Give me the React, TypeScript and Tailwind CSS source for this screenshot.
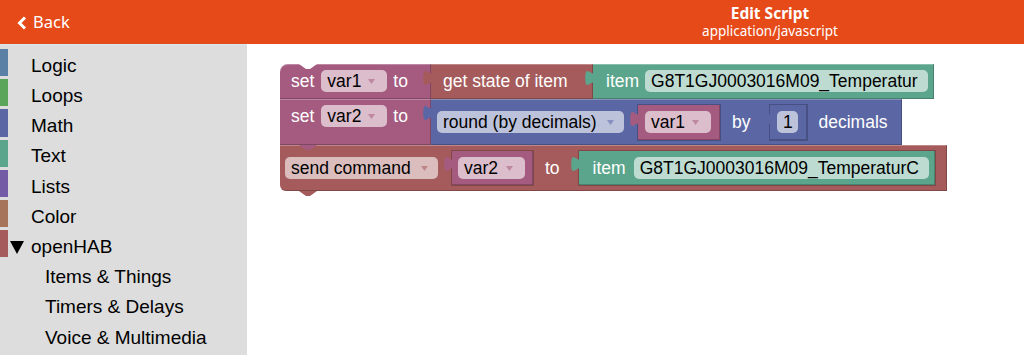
import React from "react";

const PURPLE = "#a55b80";
const RED = "#a55b5b";
const TEAL = "#5ba58c";
const BLUE = "#5b67a5";

const categories = [
    { name: "Logic", color: "#5b80a5" },
    { name: "Loops", color: "#5ba55b" },
    { name: "Math", color: "#5b67a5" },
    { name: "Text", color: "#5ba58c" },
    { name: "Lists", color: "#745ba5" },
    { name: "Color", color: "#a5745b" },
];

const subItems = ["Items & Things", "Timers & Delays", "Voice & Multimedia"];

// output tab drawn into the parent's input slot
function Tab({ color, top = "top-[6px]" }: { color: string; top?: string }) {
    return (
        <svg className={`absolute left-[-8px] ${top}`} width="9" height="16" viewBox="0 0 8 15">
            <path d="M8 0C8 10 0 -8 0 7.5S8 5 8 15Z" fill={color} />
        </svg>
    );
}

function Arrow({ color }: { color: string }) {
    return (
        <svg width="7" height="5" viewBox="0 0 7 5" className="shrink-0">
            <path d="M0 0H7L3.5 5Z" fill={color} opacity="0.55" />
        </svg>
    );
}

function Pill({ text, w, bg, arrow, pr = "pr-[10px]" }: { text: string; w: string; bg: string; arrow?: string; pr?: string }) {
    return (
        <div className={`${w} ${bg} ${pr} h-[22px] rounded-[5px] flex items-center pl-[6px] shrink-0`}>
            <span className="leading-[22px] text-black">{text}</span>
            {arrow && (
                <span className="ml-auto flex">
                    <Arrow color={arrow} />
                </span>
            )}
        </div>
    );
}

const edge = "shadow-[inset_-1px_-1px_0_rgba(0,0,0,0.22),inset_0_1px_0_rgba(255,255,255,0.28)]";
const inlineEdge = "shadow-[0_0_0_1px_rgba(0,0,0,0.22),inset_-1px_-1px_0_rgba(0,0,0,0.2)]";

function Notch({ color, className }: { color: string; className: string }) {
    return (
        <svg className={`absolute left-[19px] ${className}`} width="18" height="5" viewBox="0 0 18 5">
            <path d="M0 0L7 5H11L18 0Z" fill={color} />
        </svg>
    );
}

function Blocks() {
    return (
        <div className="flex flex-col w-fit text-[17.5px] text-white font-['Liberation_Sans',Arial,sans-serif]">
            {/* set var1 to get state of item */}
            <div className="flex">
                <div className={`relative w-[151px] h-[35px] bg-[#a55b80] rounded-tl-[8px] flex items-start pt-[6px] pl-[11px] ${edge}`}>
                    <Notch color="#ffffff" className="top-0" />
                    <span className="leading-[22px]">set</span>
                    <div className="ml-[7px]">
                        <Pill text="var1" w="w-[66px]" bg="bg-[#dbbdcc]" arrow={PURPLE} pr="pr-[12px]" />
                    </div>
                    <span className="ml-[6px] leading-[22px]">to</span>
                </div>
                <div className={`relative w-[162px] h-[35px] bg-[#a55b5b] flex items-start pt-[6px] pl-[12px] ${edge}`}>
                    <Tab color={RED} />
                    <span className="leading-[22px]">get state of item</span>
                </div>
                <div className={`relative w-[341px] h-[35px] bg-[#5ba58c] flex items-start pt-[6px] pl-[13px] ${edge}`}>
                    <Tab color={TEAL} />
                    <span className="leading-[22px]">item</span>
                    <div className="ml-[6px]">
                        <Pill text="G8T1GJ0003016M09_Temperatur" w="w-[283px]" bg="bg-[#bddbd1]" />
                    </div>
                </div>
            </div>

            {/* set var2 to round */}
            <div className="flex">
                <div className={`relative w-[151px] h-[46px] bg-[#a55b80] flex items-start pt-[6px] pl-[11px] ${edge}`}>
                    <span className="leading-[22px]">set</span>
                    <div className="ml-[7px]">
                        <Pill text="var2" w="w-[66px]" bg="bg-[#dbbdcc]" arrow={PURPLE} pr="pr-[12px]" />
                    </div>
                    <span className="ml-[6px] leading-[22px]">to</span>
                </div>
                <div className={`relative w-[471px] h-[46px] bg-[#5b67a5] flex items-center pl-[6px] ${edge}`}>
                    <Tab color={BLUE} />
                    <Pill text="round (by decimals)" w="w-[187px]" bg="bg-[#bdc2db]" arrow={BLUE} />
                    <div className={`relative ml-[14px] w-[82px] h-[35px] bg-[#a55b80] flex items-center pl-[7px] ${inlineEdge}`}>
                        <Tab color={PURPLE} />
                        <Pill text="var1" w="w-[66px]" bg="bg-[#dbbdcc]" arrow={PURPLE} pr="pr-[12px]" />
                    </div>
                    <span className="ml-[12px] leading-[22px]">by</span>
                    <div className={`relative ml-[20px] w-[37px] h-[35px] bg-[#5b67a5] flex items-center pl-[7px] ${inlineEdge}`}>
                        <Tab color={BLUE} />
                        <div className="w-[21px] h-[22px] rounded-[5px] bg-[#bdc2db] text-black flex items-center justify-center leading-[22px]">1</div>
                    </div>
                    <span className="ml-[11px] leading-[22px]">decimals</span>
                </div>
            </div>

            {/* send command var2 to item */}
            <div className={`relative w-[667px] h-[46px] bg-[#a55b5b] rounded-bl-[6px] flex items-center pl-[5px] ${edge}`}>
                <Notch color={PURPLE} className="top-0" />
                <Notch color={RED} className="bottom-[-5px]" />
                <Pill text="send command" w="w-[153px]" bg="bg-[#dbbdbd]" arrow={RED} />
                <div className={`relative ml-[14px] w-[81px] h-[34px] bg-[#a55b80] flex items-center pl-[6px] ${inlineEdge}`}>
                    <Tab color={PURPLE} top="top-[5px]" />
                    <Pill text="var2" w="w-[67px]" bg="bg-[#dbbdcc]" arrow={PURPLE} pr="pr-[12px]" />
                </div>
                <span className="ml-[12px] leading-[22px]">to</span>
                <div className={`relative ml-[19px] w-[356px] h-[34px] bg-[#5ba58c] flex items-center pl-[14px] ${inlineEdge}`}>
                    <Tab color={TEAL} top="top-[5px]" />
                    <span className="leading-[22px]">item</span>
                    <div className="ml-[8px]">
                        <Pill text="G8T1GJ0003016M09_TemperaturC" w="w-[295px]" bg="bg-[#bddbd1]" />
                    </div>
                </div>
            </div>
        </div>
    );
}

export default function App() {
    return (
        <div className="w-[1024px] h-[355px] overflow-hidden flex flex-col bg-white">
            <header className="h-[44px] shrink-0 bg-[#e64a19] flex text-white font-['Noto_Sans',sans-serif]">
                <div className="w-[516px] flex items-center pl-[17px]">
                    <svg width="10" height="14" viewBox="0 0 10 14" className="mt-[1px]">
                        <path d="M8 1.5L2.5 7L8 12.5" fill="none" stroke="white" strokeWidth="3" />
                    </svg>
                    <span className="ml-[6px] text-[16.5px] leading-none">Back</span>
                </div>
                <div className="flex-1 flex flex-col items-center pt-[4px]">
                    <div className="text-[15.5px] font-bold leading-[19px]">Edit Script</div>
                    <div className="text-[13.5px] leading-[17px]">application/javascript</div>
                </div>
            </header>
            <div className="flex flex-1 min-h-0">
                <aside className="w-[247px] shrink-0 bg-[#dddddd] border-t border-[#d3ecee] pt-[2.5px] text-[19px] text-black font-['Liberation_Sans',Arial,sans-serif]">
                    {categories.map((c) => (
                        <div key={c.name} className="flex h-[30.2px]">
                            <div className="w-2 my-[1.5px]" style={{ backgroundColor: c.color }} />
                            <span className="ml-[23px] flex items-center pt-[7px]">{c.name}</span>
                        </div>
                    ))}
                    <div className="flex h-[30.2px]">
                        <div className="w-2 my-[1.5px] bg-[#a55b5b]" />
                        <span className="ml-[2px] flex items-center pt-[7px]">
                            <svg width="14" height="13" viewBox="0 0 14 13">
                                <path d="M0 0H14L7 13Z" fill="black" />
                            </svg>
                        </span>
                        <span className="ml-[7px] flex items-center pt-[7px]">openHAB</span>
                    </div>
                    {subItems.map((s) => (
                        <div key={s} className="flex h-[30.2px] pl-[45px]">
                            <span className="flex items-center pt-[7px]">{s}</span>
                        </div>
                    ))}
                </aside>
                <main className="flex-1 pl-[33px] pt-[20px]">
                    <Blocks />
                </main>
            </div>
        </div>
    );
}
